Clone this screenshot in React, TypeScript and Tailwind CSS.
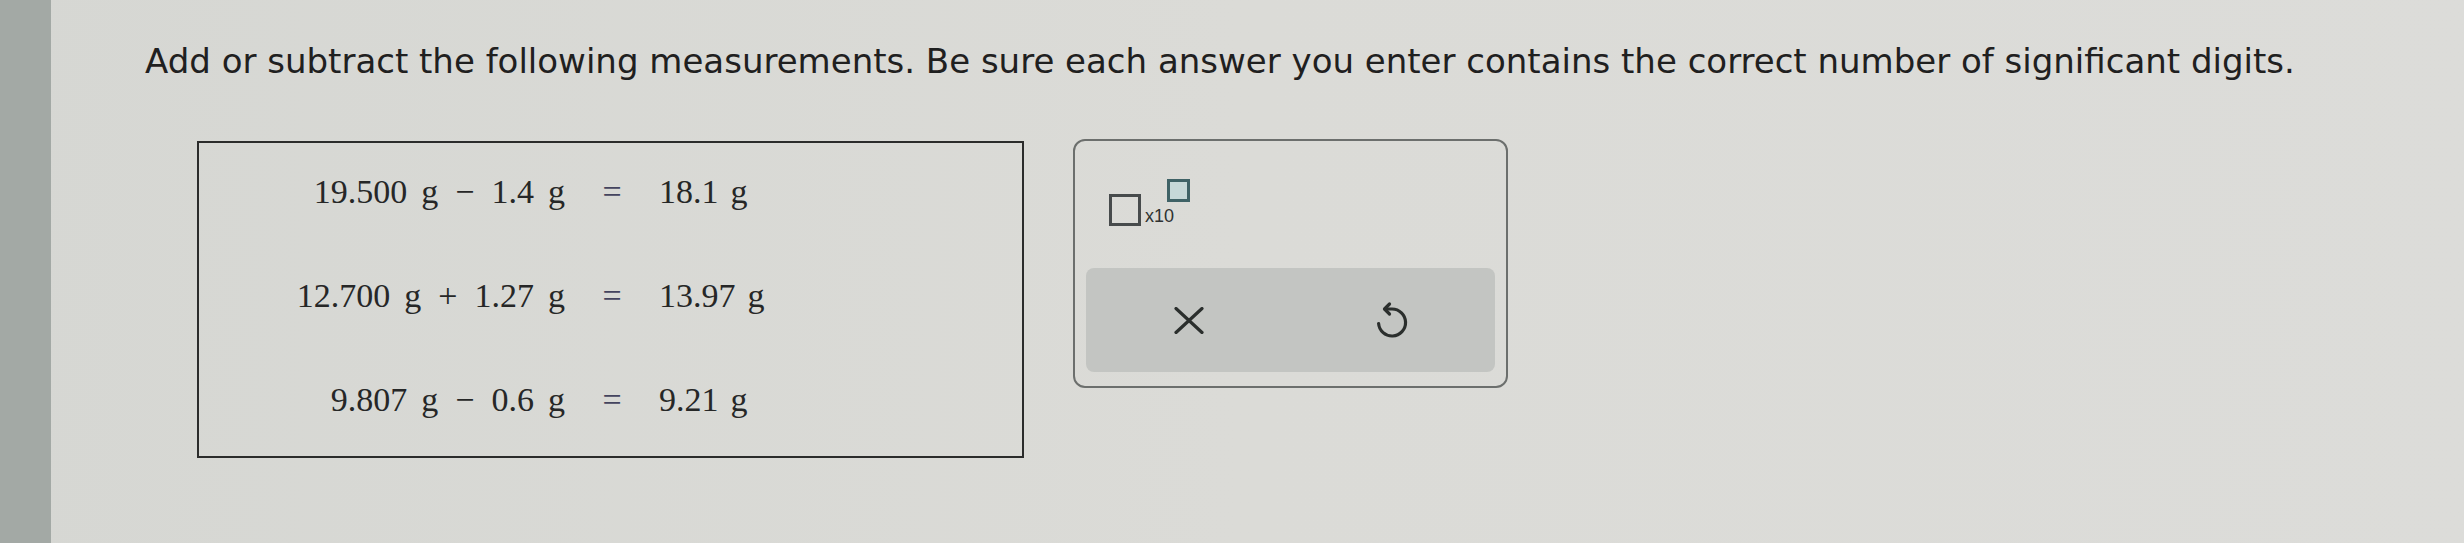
import React from 'react';

type Term = { value: string; unit: string };

const rows: { left: Term; op: string; right: Term; result: Term }[] = [
  { left: { value: '19.500', unit: 'g' }, op: '−', right: { value: '1.4', unit: 'g' }, result: { value: '18.1', unit: 'g' } },
  { left: { value: '12.700', unit: 'g' }, op: '+', right: { value: '1.27', unit: 'g' }, result: { value: '13.97', unit: 'g' } },
  { left: { value: '9.807', unit: 'g' }, op: '−', right: { value: '0.6', unit: 'g' }, result: { value: '9.21', unit: 'g' } },
];

const Measure: React.FC<{ term: Term; gap?: string }> = ({ term, gap = 'gap-[14px]' }) => (
  <span className={`flex ${gap}`}>
    <span>{term.value}</span>
    <span>{term.unit}</span>
  </span>
);

const ClearIcon: React.FC = () => (
  <svg width="30" height="27" viewBox="0 0 30 27" fill="none" stroke="#2b2f2d" strokeWidth="3.2" strokeLinecap="round">
    <path d="M2 1.5 L28 25.5" />
    <path d="M28 1.5 L2 25.5" />
  </svg>
);

const UndoIcon: React.FC = () => (
  <svg width="32" height="38" viewBox="0 0 32 38" fill="none" stroke="#2b2f2d" strokeWidth="3.2" strokeLinecap="round" strokeLinejoin="round">
    <path d="M9 8 H16 A13.5 13.5 0 1 1 2.6 22.5" />
    <path d="M13.5 3 L8.5 8 L13.5 13" />
  </svg>
);

const App: React.FC = () => {
  return (
    <div className="flex h-[543px] w-full overflow-hidden bg-gradient-to-r from-[#d6d7d3] via-[#dbdbd7] to-[#dcdcd9]">
      <div className="w-[51px] shrink-0 bg-[#a3a9a5]" />
      <div className="flex-1 pl-[94px] pt-[41px]">
        <p className="text-[34px] leading-[40px] text-[#1f2020] whitespace-nowrap" style={{ fontFamily: '"DejaVu Sans", Verdana, sans-serif' }}>
          Add or subtract the following measurements. Be sure each answer you enter contains the correct number of significant digits.
        </p>

        <div className="ml-[52px] mt-[58px] flex items-start gap-[49px]">
          {/* measurements */}
          <div
            className="mt-[2px] h-[317px] w-[827px] border-2 border-[#2b2c2b] text-[34px] text-[#262727]"
            style={{ fontFamily: '"Liberation Serif", "Times New Roman", serif' }}
          >
            {rows.map((r, i) => (
              <div key={i} className="grid h-[104px] grid-cols-[366px_94px_1fr] items-start leading-[98px]">
                <div className="flex justify-end">
                  <Measure term={r.left} />
                  <span className="mx-[17px]">{r.op}</span>
                  <Measure term={r.right} />
                </div>
                <div className="text-center text-[#44445e]">=</div>
                <div className="flex">
                  <Measure term={r.result} gap="gap-[12px]" />
                </div>
              </div>
            ))}
          </div>

          {/* answer panel */}
          <div className="h-[249px] w-[435px] rounded-[12px] border-2 border-[#6c6f6d] px-[11px] pt-[38px]">
            <div className="flex items-start pl-[23px]">
              <div className="mt-[15px] h-[32px] w-[32px] border-[3px] border-[#474b4c]" />
              <span
                className="ml-[4px] mt-[28px] text-[18px] leading-[18px] text-[#2f3231]"
                style={{ fontFamily: '"Liberation Sans", Arial, sans-serif' }}
              >
                x10
              </span>
              <div className="ml-[-7px] h-[23px] w-[23px] border-[3px] border-[#3f6266] bg-[#c6d8d8]" />
            </div>
            <div className="mt-[42px] grid h-[104px] grid-cols-2 items-center rounded-[8px] bg-[#c3c5c2]">
              <div className="flex justify-center pl-[2px]">
                <ClearIcon />
              </div>
              <div className="flex justify-center pr-[2px]">
                <UndoIcon />
              </div>
            </div>
          </div>
        </div>
      </div>
    </div>
  );
};

export default App;
